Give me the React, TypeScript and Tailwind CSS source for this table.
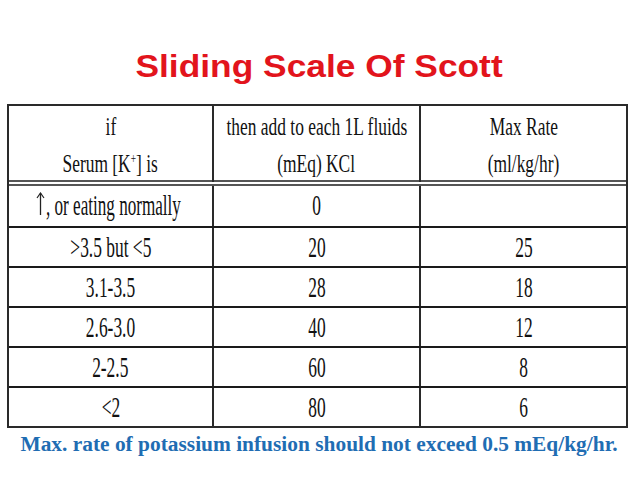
import React from "react";

const rows = [
  { k: "arrow", add: "0", rate: "" },
  { k: ">3.5 but <5", add: "20", rate: "25" },
  { k: "3.1-3.5", add: "28", rate: "18" },
  { k: "2.6-3.0", add: "40", rate: "12" },
  { k: "2-2.5", add: "60", rate: "8" },
  { k: "<2", add: "80", rate: "6" },
];

function Squeeze({ children }: { children: React.ReactNode }) {
  return (
    <span className="inline-block whitespace-nowrap scale-x-[0.58]">{children}</span>
  );
}

function HeadCell({ top, bottom, last }: { top: React.ReactNode; bottom: React.ReactNode; last?: boolean }) {
  return (
    <div
      className={`flex flex-col items-center pt-[2px] text-[26px] leading-[37px] ${
        last ? "flex-1" : "border-r-2 border-[#2a2a2a]"
      }`}
    >
      <span className="inline-block whitespace-nowrap scale-x-[0.67]">{top}</span>
      <span className="inline-block whitespace-nowrap scale-x-[0.67]">{bottom}</span>
    </div>
  );
}

export default function App() {
  return (
    <div className="w-[638px] h-[479px] bg-white overflow-hidden">
      <div className="pt-[48px] h-[104px] text-center">
        <h1
          className="inline-block scale-x-[1.14] text-[31px] leading-[38px] font-bold text-[#e2141c]"
          style={{ fontFamily: '"Liberation Sans", Arial, sans-serif' }}
        >
          Sliding Scale Of Scott
        </h1>
      </div>

      <div
        className="ml-[7px] w-[621px] border-2 border-[#2a2a2a] text-[#111]"
        style={{ fontFamily: '"Liberation Serif", "Times New Roman", serif' }}
      >
        <div className="flex h-[80px] border-b-[6px] border-double border-[#555]">
          <div className="w-[205px]">
            <HeadCell
              top="if"
              bottom={
                <>
                  Serum [K<sup className="text-[14px] -top-[9px]">+</sup>] is
                </>
              }
            />
          </div>
          <div className="w-[207px]">
            <HeadCell top="then add to each 1L fluids" bottom="(mEq) KCl" />
          </div>
          <div className="flex-1 flex">
            <HeadCell top="Max Rate" bottom="(ml/kg/hr)" last />
          </div>
        </div>

        {rows.map((r, i) => (
          <div
            key={r.k}
            className={`flex h-[40px] text-[30px] leading-[38px] text-center ${
              i > 0 ? "border-t-2 border-[#1a1a1a]" : "h-[38px]"
            }`}
          >
            <div className="w-[205px] border-r-2 border-[#2a2a2a]">
              {r.k === "arrow" ? (
                <div className="flex items-start justify-center pt-[6px] pr-[4px]">
                  <svg width="9" height="24" viewBox="0 0 9 24" className="mr-[1px]">
                    <path d="M4.5 1 V23" stroke="#222" strokeWidth="1.3" fill="none" />
                    <path d="M1 6 L4.5 1 L8 6" stroke="#222" strokeWidth="1.2" fill="none" />
                  </svg>
                  <span className="-mt-[6px] inline-block w-[136px] whitespace-nowrap scale-x-[0.57] origin-left">
                    , or eating normally
                  </span>
                </div>
              ) : (
                <Squeeze>{r.k}</Squeeze>
              )}
            </div>
            <div className="w-[207px] border-r-2 border-[#2a2a2a]">
              <Squeeze>{r.add}</Squeeze>
            </div>
            <div className="flex-1">
              <Squeeze>{r.rate}</Squeeze>
            </div>
          </div>
        ))}
      </div>

      <p
        className="mt-[4px] text-center text-[21.4px] leading-[24px] font-bold text-[#1f6db3] whitespace-nowrap"
        style={{ fontFamily: '"Liberation Serif", "Times New Roman", serif' }}
      >
        Max. rate of potassium infusion should not exceed 0.5 mEq/kg/hr.
      </p>
    </div>
  );
}
